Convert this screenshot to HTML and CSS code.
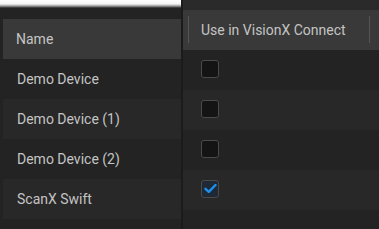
FILE: index.html
```html
<!DOCTYPE html>
<html>
  <head>
    <link rel="stylesheet" href="styles.css">
    <title>Devices</title>
  </head>
  <body>
    <div class="table-wrap">
      <div class="names">
        <div class="names-top"></div>
        <div class="names-body">
          <div class="cell head">Name</div>
          <div class="cell">Demo Device</div>
          <div class="cell alt">Demo Device (1)</div>
          <div class="cell">Demo Device (2)</div>
          <div class="cell alt">ScanX Swift</div>
        </div>
      </div>
      <div class="frozen">
        <div class="frozen-head">
          <span class="sep"></span>
          <span class="head-text">Use in VisionX Connect</span>
          <span class="sep sep-right"></span>
        </div>
        <div class="check-row"><span class="box"></span></div>
        <div class="check-row alt"><span class="box"></span></div>
        <div class="check-row"><span class="box"></span></div>
        <div class="check-row alt">
          <span class="box checked">
            <svg width="13" height="11" viewBox="0 0 13 11"><path d="M1.5 5.8 L4.8 8.8 L11.5 2" fill="none" stroke="#1e90ef" stroke-width="2.4" stroke-linecap="round" stroke-linejoin="round"/></svg>
          </span>
        </div>
        <div class="check-row"></div>
      </div>
    </div>
  </body>
</html>
```

FILE: styles.css
```css
html, body {
  margin: 0;
  padding: 0;
  height: 100%;
  background: #232323;
  font-family: Roboto, "Noto Sans", sans-serif;
  font-size: 14px;
  color: #c4c4c4;
  overflow: hidden;
}

.table-wrap {
  display: flex;
  height: 229px;
  overflow: hidden;
}

.names {
  width: 181px;
  flex-shrink: 0;
}

.names-top {
  height: 8px;
  background: linear-gradient(#ffffff 0, #f4f4f4 4px, #9a9a9a 6px, #232323 8px);
}

.names-body {
  padding: 11px 0 0 3px;
}

.cell {
  height: 40px;
  display: flex;
  align-items: center;
  padding-left: 14px;
  background: #232323;
}

.cell.head {
  background: #393939;
  padding-left: 13px;
}

.cell.alt {
  background: #282828;
}

.frozen {
  flex: 1;
  border-left: 2px solid #1b1b1b;
  background: #2a2a2a;
  padding-top: 10px;
}

.frozen-head {
  height: 40px;
  background: #393939;
  display: flex;
  align-items: center;
  padding-left: 5px;
}

.sep {
  width: 1px;
  height: 27px;
  background: #555555;
  margin-top: -1px;
}

.sep-right {
  margin-left: auto;
  margin-right: 9px;
}

.head-text {
  margin-left: 12px;
}

.check-row {
  height: 40px;
  display: flex;
  align-items: center;
  padding-left: 18px;
  background: #232323;
}

.check-row.alt {
  background: #282828;
}

.box {
  width: 16px;
  height: 16px;
  border: 1px solid #4a4a4a;
  border-radius: 3px;
  background: #141414;
  display: flex;
  align-items: center;
  justify-content: center;
  margin-top: -3px;
}

.box.checked {
  background: #1f2936;
}
```
